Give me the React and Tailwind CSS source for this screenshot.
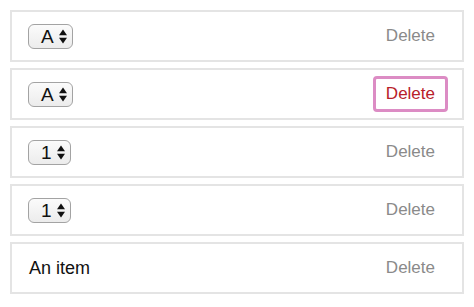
import React from 'react';

const items = [
  { kind: 'select', value: 'A' },
  { kind: 'select', value: 'A', focused: true },
  { kind: 'select', value: '1' },
  { kind: 'select', value: '1' },
  { kind: 'text', value: 'An item' },
];

const Arrows = () => (
  <svg width="8" height="15" viewBox="0 0 8 15" className="ml-[5px]">
    <path d="M4 0.5 L8 6.3 L0 6.3 Z" fill="#111" />
    <path d="M4 14.5 L8 8.7 L0 8.7 Z" fill="#111" />
  </svg>
);

const FakeSelect = ({ value }) => (
  <div className="flex items-center h-[25px] pl-[12px] pr-[5px] rounded-[6px] border border-[#a3a3a3] bg-gradient-to-b from-[#fbfbfb] to-[#ececec] text-[19px] text-[#111] leading-none">
    <span>{value}</span>
    <Arrows />
  </div>
);

const App = () => {
  return (
    <div className="w-[474px] h-[307px] bg-white px-[10px] pt-[10px] flex flex-col gap-[6px] font-['Liberation_Sans',Arial,sans-serif]">
      {items.map((item, i) => (
        <div
          key={i}
          className="h-[52px] border-2 border-[#e4e4e4] flex items-center justify-between pl-[16px] pr-[14px]"
        >
          {item.kind === 'select' ? (
            <FakeSelect value={item.value} />
          ) : (
            <span className="text-[18px] text-[#111] pl-[1px]">{item.value}</span>
          )}
          <button
            type="button"
            className={
              item.focused
                ? 'h-[36px] px-[10px] border-[3px] border-[#dc8cc4] rounded-[4px] text-[17px] text-[#b8202a]'
                : 'h-[36px] px-[10px] border-[3px] border-transparent text-[17px] text-[#8a8a8a]'
            }
          >
            Delete
          </button>
        </div>
      ))}
    </div>
  );
};

export default App;
